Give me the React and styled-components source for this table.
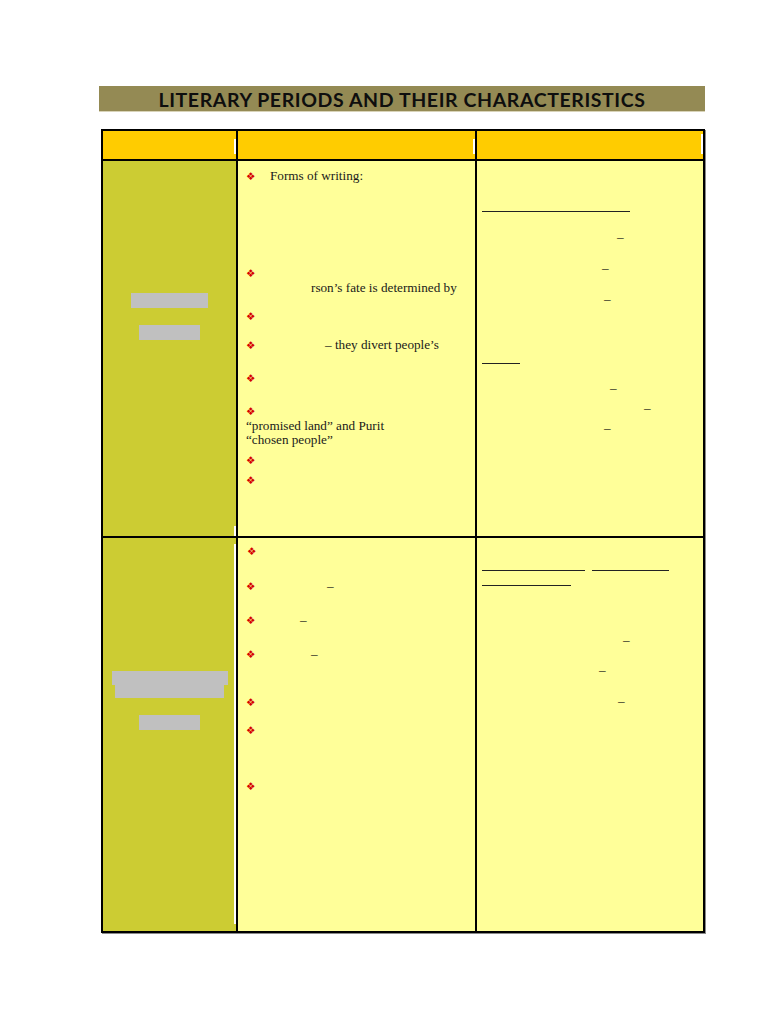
import React from "react";
import styled, { createGlobalStyle } from "styled-components";

const Global = createGlobalStyle`
  html, body { margin: 0; padding: 0; background: #ffffff; }
  body { font-family: "Liberation Serif", "Times New Roman", serif; }
`;

const Page = styled.div`
  width: 768px;
  min-height: 1024px;
  box-sizing: border-box;
  padding: 86px 0 0 99px;
  display: flex;
  flex-direction: column;
  align-items: flex-start;
`;

const TitleBar = styled.div`
  width: 606px;
  height: 26px;
  background: #948a54;
  border-bottom: 1px solid #d8d3b8;
  box-sizing: border-box;
  display: flex;
  align-items: center;
  justify-content: center;
  padding-top: 1px;
  font-family: Lato, "Open Sans", sans-serif;
  font-weight: 700;
  font-size: 19.5px;
  letter-spacing: 0.6px;
  color: #0e0e0e;
`;

const Table = styled.div`
  margin: 17px 0 0 2px;
  display: grid;
  grid-template-columns: 133px 237px 226px;
  grid-template-rows: 28px 375px 393px;
  gap: 2px;
  padding: 2px;
  background: #000000;
  box-shadow: 1px 1px 0 #8a8a8a;
`;

const HeadCell = styled.div`
  background: #ffcc00;
  position: relative;
`;

const WhiteTick = styled.span`
  position: absolute;
  right: 0;
  top: ${(p) => p.$top}px;
  height: ${(p) => p.$h}px;
  width: 2px;
  background: #ffffff;
`;

const PeriodCell = styled.div`
  background: #cccc33;
  display: flex;
  flex-direction: column;
  align-items: center;
  padding-top: ${(p) => p.$pad}px;
  position: relative;
`;

const Redact = styled.span`
  display: block;
  background: #c0c0c0;
  width: ${(p) => p.$w}px;
  height: ${(p) => p.$h}px;
  margin-top: ${(p) => p.$mt || 0}px;
`;

const BodyCell = styled.div`
  background: #ffff99;
  display: flex;
  flex-direction: column;
  padding-left: ${(p) => p.$pl}px;
  font-family: "Liberation Serif", "Times New Roman", serif;
  font-size: 13.2px;
  color: #1a1a1a;
`;

const Line = styled.div`
  display: flex;
  align-items: center;
  height: 14px;
  margin-top: ${(p) => p.$mt}px;
  white-space: nowrap;
`;

const Bullet = styled.span`
  width: 10px;
  flex: none;
  color: #d40000;
  font-family: "DejaVu Sans", sans-serif;
  font-size: 10.5px;
  line-height: 14px;
  margin-left: ${(p) => p.$ml || 0}px;
`;

const Text = styled.span`
  margin-left: ${(p) => p.$ml}px;
  line-height: 14px;
`;

const Blank = styled.span`
  display: inline-block;
  width: ${(p) => p.$w}px;
  height: 12px;
  border-bottom: 1px solid #222;
  margin-left: ${(p) => p.$ml}px;
  flex: none;
`;

// y = vertical centre on the page; converted to flow margins below
const mid1 = [
  { y: 177, bullet: true, text: "Forms of writing:", x: 270 },
  { y: 274, bullet: true },
  { y: 289, text: "rson\u2019s fate is determined by", x: 311 },
  { y: 317, bullet: true },
  { y: 346, bullet: true, text: "\u2013 they divert people\u2019s", x: 325 },
  { y: 379, bullet: true },
  { y: 412, bullet: true },
  { y: 427, text: "\u201Cpromised land\u201D and Purit", x: 246 },
  { y: 441, text: "\u201Cchosen people\u201D", x: 246 },
  { y: 461, bullet: true },
  { y: 481, bullet: true },
];

const mid2 = [
  { y: 552, bullet: true, bx: 1 },
  { y: 587, bullet: true, text: "\u2013", x: 327 },
  { y: 621, bullet: true, text: "\u2013", x: 300 },
  { y: 655, bullet: true, text: "\u2013", x: 311 },
  { y: 703, bullet: true },
  { y: 731, bullet: true },
  { y: 787, bullet: true },
];

const right1 = [
  { y: 206, blanks: [{ x: 482, w: 148 }] },
  { y: 238, text: "\u2013", x: 617 },
  { y: 269, text: "\u2013", x: 602 },
  { y: 300, text: "\u2013", x: 604 },
  { y: 358, blanks: [{ x: 482, w: 38 }] },
  { y: 389, text: "\u2013", x: 610 },
  { y: 409, text: "\u2013", x: 644 },
  { y: 429, text: "\u2013", x: 604 },
];

const right2 = [
  { y: 565, blanks: [{ x: 482, w: 103 }, { x: 592, w: 77 }] },
  { y: 580, blanks: [{ x: 482, w: 89 }] },
  { y: 641, text: "\u2013", x: 623 },
  { y: 671, text: "\u2013", x: 599 },
  { y: 702, text: "\u2013", x: 618 },
];

function Lines({ items, top, left }) {
  let cursor = top;
  return items.map((it, i) => {
    const lineTop = it.y - 7;
    const mt = lineTop - cursor;
    cursor = lineTop + 14;
    let used = left;
    const parts = [];
    if (it.bullet) {
      parts.push(<Bullet key="b" $ml={it.bx || 0}>{"\u2756"}</Bullet>);
      used += 10 + (it.bx || 0);
    }
    if (it.text) {
      parts.push(
        <Text key="t" $ml={it.x - used}>
          {it.text}
        </Text>
      );
    }
    if (it.blanks) {
      it.blanks.forEach((b, j) => {
        parts.push(<Blank key={"u" + j} $ml={b.x - used} $w={b.w} />);
        used = b.x + b.w;
      });
    }
    return (
      <Line key={i} $mt={mt}>
        {parts}
      </Line>
    );
  });
}

export default function App() {
  return (
    <>
      <Global />
      <Page>
        <TitleBar>LITERARY PERIODS AND THEIR CHARACTERISTICS</TitleBar>
        <Table>
          <HeadCell>
            <WhiteTick $top={8} $h={15} />
          </HeadCell>
          <HeadCell>
            <WhiteTick $top={8} $h={15} />
          </HeadCell>
          <HeadCell>
            <WhiteTick $top={3} $h={20} />
          </HeadCell>

          <PeriodCell $pad={132}>
            <Redact $w={77} $h={15} />
            <Redact $w={61} $h={15} $mt={17} />
            <WhiteTick $top={365} $h={10} />
          </PeriodCell>
          <BodyCell $pl={8}>
            <Lines items={mid1} top={162} left={246} />
          </BodyCell>
          <BodyCell $pl={5}>
            <Lines items={right1} top={162} left={482} />
          </BodyCell>

          <PeriodCell $pad={133}>
            <Redact $w={116} $h={14} />
            <Redact $w={109} $h={13} />
            <Redact $w={61} $h={15} $mt={17} />
            <WhiteTick $top={6} $h={380} />
          </PeriodCell>
          <BodyCell $pl={8}>
            <Lines items={mid2} top={539} left={246} />
          </BodyCell>
          <BodyCell $pl={5}>
            <Lines items={right2} top={539} left={482} />
          </BodyCell>
        </Table>
      </Page>
    </>
  );
}
